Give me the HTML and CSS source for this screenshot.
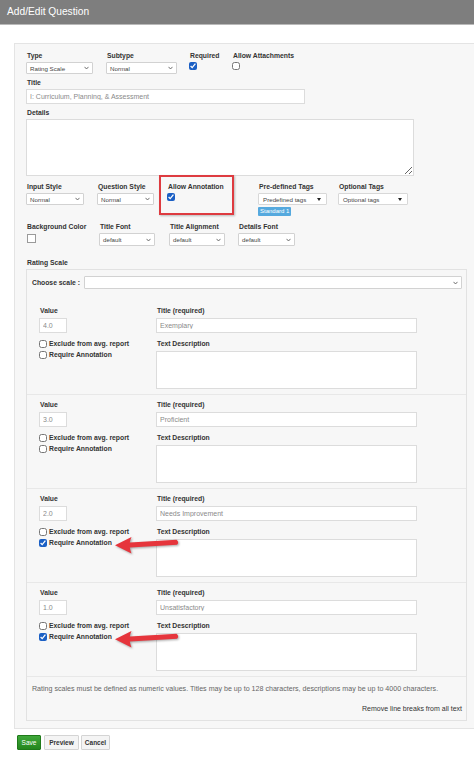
FILE: index.html
```html
<!DOCTYPE html>
<html lang="en">
<head>
<meta charset="utf-8">
<title>Add/Edit Question</title>
<link rel="stylesheet" href="styles.css">
</head>
<body>
<header class="topbar">Add/Edit Question</header>
<main class="page">
  <section class="panel">
    <div class="row">
      <div class="field w80"><span class="lbl">Type</span><div class="select s67"><span>Rating Scale</span><svg class="chev" viewBox="0 0 6 4"><path d="M0.6 0.6 L3 3.2 L5.4 0.6"/></svg></div></div>
      <div class="field w83"><span class="lbl">Subtype</span><div class="select s71"><span>Normal</span><svg class="chev" viewBox="0 0 6 4"><path d="M0.6 0.6 L3 3.2 L5.4 0.6"/></svg></div></div>
      <div class="field w43"><span class="lbl">Required</span><input type="checkbox" checked></div>
      <div class="field"><span class="lbl">Allow Attachments</span><input type="checkbox" class="cb-low"></div>
    </div>

    <div class="block"><span class="lbl">Title</span><input type="text" class="text-input title-input" value="I: Curriculum, Planning, &amp; Assessment"></div>
    <div class="block"><span class="lbl">Details</span><textarea class="details"></textarea></div>

    <div class="row row-3">
      <div class="field w71"><span class="lbl">Input Style</span><div class="select s58"><span>Normal</span><svg class="chev" viewBox="0 0 6 4"><path d="M0.6 0.6 L3 3.2 L5.4 0.6"/></svg></div></div>
      <div class="field w70"><span class="lbl">Question Style</span><div class="select s57"><span>Normal</span><svg class="chev" viewBox="0 0 6 4"><path d="M0.6 0.6 L3 3.2 L5.4 0.6"/></svg></div></div>
      <div class="field w91 highlight"><span class="lbl">Allow Annotation</span><input type="checkbox" checked class="cb-mid"></div>
      <div class="field w80"><span class="lbl">Pre-defined Tags</span><div class="select tags s69"><span>Predefined tags</span><i class="caret"></i></div><span class="badge">Standard 1</span></div>
      <div class="field"><span class="lbl">Optional Tags</span><div class="select tags s70"><span>Optional tags</span><i class="caret"></i></div></div>
    </div>

    <div class="row row-4">
      <div class="field w73"><span class="lbl">Background Color</span><div class="swatch"></div></div>
      <div class="field w70"><span class="lbl">Title Font</span><div class="select tall s56"><span>default</span><svg class="chev" viewBox="0 0 6 4"><path d="M0.6 0.6 L3 3.2 L5.4 0.6"/></svg></div></div>
      <div class="field w69"><span class="lbl">Title Alignment</span><div class="select tall s56"><span>default</span><svg class="chev" viewBox="0 0 6 4"><path d="M0.6 0.6 L3 3.2 L5.4 0.6"/></svg></div></div>
      <div class="field"><span class="lbl">Details Font</span><div class="select tall s57"><span>default</span><svg class="chev" viewBox="0 0 6 4"><path d="M0.6 0.6 L3 3.2 L5.4 0.6"/></svg></div></div>
    </div>

    <span class="lbl section-lbl">Rating Scale</span>
    <div class="scale-panel">
      <div class="choose-row">
        <span class="choose-lbl">Choose scale :</span>
        <div class="select grow"><span></span><svg class="chev" viewBox="0 0 6 4"><path d="M0.6 0.6 L3 3.2 L5.4 0.6"/></svg></div>
      </div>

      <div class="scale-item">
        <div class="col-left">
          <span class="lbl">Value</span>
          <input type="text" class="text-input value-input" value="4.0">
          <label class="chk-row"><input type="checkbox">Exclude from avg. report</label>
          <label class="chk-row"><input type="checkbox">Require Annotation</label>
        </div>
        <div class="col-right">
          <span class="lbl">Title (required)</span>
          <input type="text" class="text-input wide-input" value="Exemplary">
          <span class="lbl desc-lbl">Text Description</span>
          <textarea class="desc"></textarea>
        </div>
      </div>

      <div class="scale-item">
        <div class="col-left">
          <span class="lbl">Value</span>
          <input type="text" class="text-input value-input" value="3.0">
          <label class="chk-row"><input type="checkbox">Exclude from avg. report</label>
          <label class="chk-row"><input type="checkbox">Require Annotation</label>
        </div>
        <div class="col-right">
          <span class="lbl">Title (required)</span>
          <input type="text" class="text-input wide-input" value="Proficient">
          <span class="lbl desc-lbl">Text Description</span>
          <textarea class="desc"></textarea>
        </div>
      </div>

      <div class="scale-item">
        <div class="col-left">
          <span class="lbl">Value</span>
          <input type="text" class="text-input value-input" value="2.0">
          <label class="chk-row"><input type="checkbox">Exclude from avg. report</label>
          <label class="chk-row"><input type="checkbox" checked>Require Annotation</label>
        </div>
        <div class="col-right">
          <span class="lbl">Title (required)</span>
          <input type="text" class="text-input wide-input" value="Needs Improvement">
          <span class="lbl desc-lbl">Text Description</span>
          <textarea class="desc"></textarea>
        </div>
        <svg class="arrow" viewBox="0 0 70 22"><path d="M2 11.2 L18.5 3 Q17.2 6 16.8 8.6 L63.5 5.8 Q66.5 8.2 64 10.8 L16.8 13.6 Q17.2 16.4 18.5 19.4 Z"/></svg>
      </div>

      <div class="scale-item">
        <div class="col-left">
          <span class="lbl">Value</span>
          <input type="text" class="text-input value-input" value="1.0">
          <label class="chk-row"><input type="checkbox">Exclude from avg. report</label>
          <label class="chk-row"><input type="checkbox" checked>Require Annotation</label>
        </div>
        <div class="col-right">
          <span class="lbl">Title (required)</span>
          <input type="text" class="text-input wide-input" value="Unsatisfactory">
          <span class="lbl desc-lbl">Text Description</span>
          <textarea class="desc"></textarea>
        </div>
        <svg class="arrow" viewBox="0 0 70 22"><path d="M2 11.2 L18.5 3 Q17.2 6 16.8 8.6 L63.5 5.8 Q66.5 8.2 64 10.8 L16.8 13.6 Q17.2 16.4 18.5 19.4 Z"/></svg>
      </div>

      <div class="scale-foot">
        <p class="note">Rating scales must be defined as numeric values. Titles may be up to 128 characters, descriptions may be up to 4000 characters.</p>
        <p class="remove">Remove line breaks from all text</p>
      </div>
    </div>
  </section>

  <div class="actions">
    <button class="btn btn-save">Save</button>
    <button class="btn btn-preview">Preview</button>
    <button class="btn btn-cancel">Cancel</button>
  </div>
</main>
</body>
</html>
```
FILE: styles.css
```css
* { box-sizing: border-box; }
html, body { margin: 0; padding: 0; }
body {
  width: 474px;
  height: 761px;
  overflow: hidden;
  background: #fff;
  font-family: "Liberation Sans", Arial, sans-serif;
  color: #333;
}

.topbar {
  height: 25px;
  background: #7e7e7e;
  border-bottom: 1px solid #b9b9b9;
  color: #fff;
  font-size: 10.2px;
  line-height: 24px;
  padding-left: 7px;
}

.page { padding: 18px 0 0 14px; }

.panel {
  width: 480px;
  background: #f7f7f7;
  border: 1px solid #e4e4e4;
  border-right: none;
  padding: 7px 0 7px 11px;
}

.row { display: flex; align-items: flex-start; }
.field { display: flex; flex-direction: column; align-items: flex-start; }
.w43 { width: 43px; }
.w69 { width: 69px; }
.w70 { width: 70px; }
.w71 { width: 71px; }
.w73 { width: 73px; }
.w80 { width: 80px; }
.w83 { width: 83px; }
.w91 { width: 91px; }

.lbl {
  display: block;
  font-size: 6.8px;
  font-weight: bold;
  line-height: 9px;
  padding-left: 1px;
  margin-bottom: 2px;
  white-space: nowrap;
  color: #333;
}

input[type="checkbox"] {
  width: 8px;
  height: 8px;
  margin: 0;
  accent-color: #1b5fc4;
}
.cb-low { margin-top: 1px; }
.cb-mid { margin-top: 2px; }

.select {
  display: flex;
  align-items: center;
  justify-content: space-between;
  height: 12px;
  background: #fff;
  border: 1px solid #d2d2d2;
  border-radius: 1px;
  padding: 0 3px 0 3px;
  font-size: 6.2px;
  color: #444;
  white-space: nowrap;
}
.select.tall { height: 13px; }
.chev {
  width: 5px;
  height: 4px;
  fill: none;
  stroke: #555;
  stroke-width: 1;
}
.s56 { width: 56px; }
.s57 { width: 57px; }
.s58 { width: 58px; }
.s67 { width: 67px; }
.s69 { width: 69px; }
.s70 { width: 70px; }
.s71 { width: 71px; }
.select.tags { padding-right: 5px; padding-left: 4px; border-color: #d8d8d8; }
.caret {
  width: 0;
  height: 0;
  border-left: 2.5px solid transparent;
  border-right: 2.5px solid transparent;
  border-top: 3px solid #222;
}
.badge {
  display: block;
  margin-top: 2px;
  height: 9px;
  padding: 0 2px;
  background: #55a9de;
  color: #fff;
  font-size: 6px;
  line-height: 9px;
  border-radius: 1px;
}

.block { margin-top: 4px; }
.text-input {
  display: block;
  height: 15px;
  margin: 0;
  padding: 0 3px;
  border: 1px solid #dcdcdc;
  background: #fff;
  font-family: "Liberation Sans", Arial, sans-serif;
  font-size: 7px;
  color: #8a8a8a;
  outline: none;
}
.title-input { width: 279px; }
textarea {
  display: block;
  margin: 0;
  padding: 2px;
  border: 1px solid #dcdcdc;
  background: #fff;
  font-family: "Liberation Sans", Arial, sans-serif;
  font-size: 7px;
}
.details { width: 388px; height: 57px; resize: both; }

.row-3 { margin-top: 6px; }
.row-4 { margin-top: 6px; }

.highlight { position: relative; }
.highlight::after {
  content: "";
  position: absolute;
  left: -8px;
  top: -7px;
  width: 71px;
  height: 36px;
  border: 2px solid #de3b40;
  box-shadow: 1px 1px 2px rgba(0, 0, 0, 0.25);
}

.swatch {
  width: 9px;
  height: 9px;
  margin-top: 1px;
  margin-left: 1px;
  background: #fff;
  border: 1px solid #9a9a9a;
}

.section-lbl { margin-top: 12px; margin-bottom: 2px; }

.scale-panel {
  width: 441px;
  background: #f7f7f7;
  border: 1px solid #e2e2e2;
}
.choose-row {
  display: flex;
  align-items: center;
  padding: 6px 4px 12px 5px;
}
.choose-lbl {
  font-size: 6.8px;
  font-weight: bold;
  white-space: nowrap;
  margin-right: 2px;
  width: 50px;
}
.select.grow { flex: 1; height: 13px; }

.scale-item {
  position: relative;
  display: flex;
  padding: 5px 0 5px 12px;
  border-bottom: 1px solid #e8e8e8;
}
.scale-item:last-of-type { border-bottom: none; }
.scale-item .lbl { margin-bottom: 3px; }
.col-left { width: 117px; }
.col-right { width: 261px; }
.value-input { width: 28px; margin-bottom: 5px; }
.wide-input { width: 261px; }
.desc-lbl { margin-top: 6px; }
.desc { width: 261px; height: 38px; resize: none; }

.chk-row {
  display: flex;
  align-items: center;
  height: 11px;
  font-size: 6.8px;
  font-weight: bold;
  white-space: nowrap;
}
.chk-row input { margin-right: 2px; }

.arrow {
  position: absolute;
  left: 86px;
  top: 45px;
  width: 70px;
  height: 22px;
  fill: #e6353c;
  filter: drop-shadow(1px 1px 1px rgba(0, 0, 0, 0.35));
}

.scale-foot { padding: 8px 4px 7px 5px; }
.scale-foot p { margin: 0; line-height: 9px; white-space: nowrap; }
.note { color: #666; font-size: 7.1px; }
.remove { text-align: right; margin-top: 10px !important; color: #333; font-size: 7px; }

.actions {
  display: flex;
  gap: 2px;
  padding: 6px 0 0 3px;
}
.btn {
  height: 15px;
  margin: 0;
  padding: 0;
  border: 1px solid #d4d4d4;
  border-radius: 1px;
  background: #f4f4f4;
  font-family: "Liberation Sans", Arial, sans-serif;
  font-size: 6.5px;
  font-weight: bold;
  color: #333;
}
.btn-save {
  width: 24px;
  background: linear-gradient(#3fa83a, #24861e);
  border-color: #1f7a1a;
  color: #fff;
  font-weight: normal;
  margin-right: 1px;
}
.btn-preview { width: 35px; }
.btn-cancel { width: 29px; }
```
